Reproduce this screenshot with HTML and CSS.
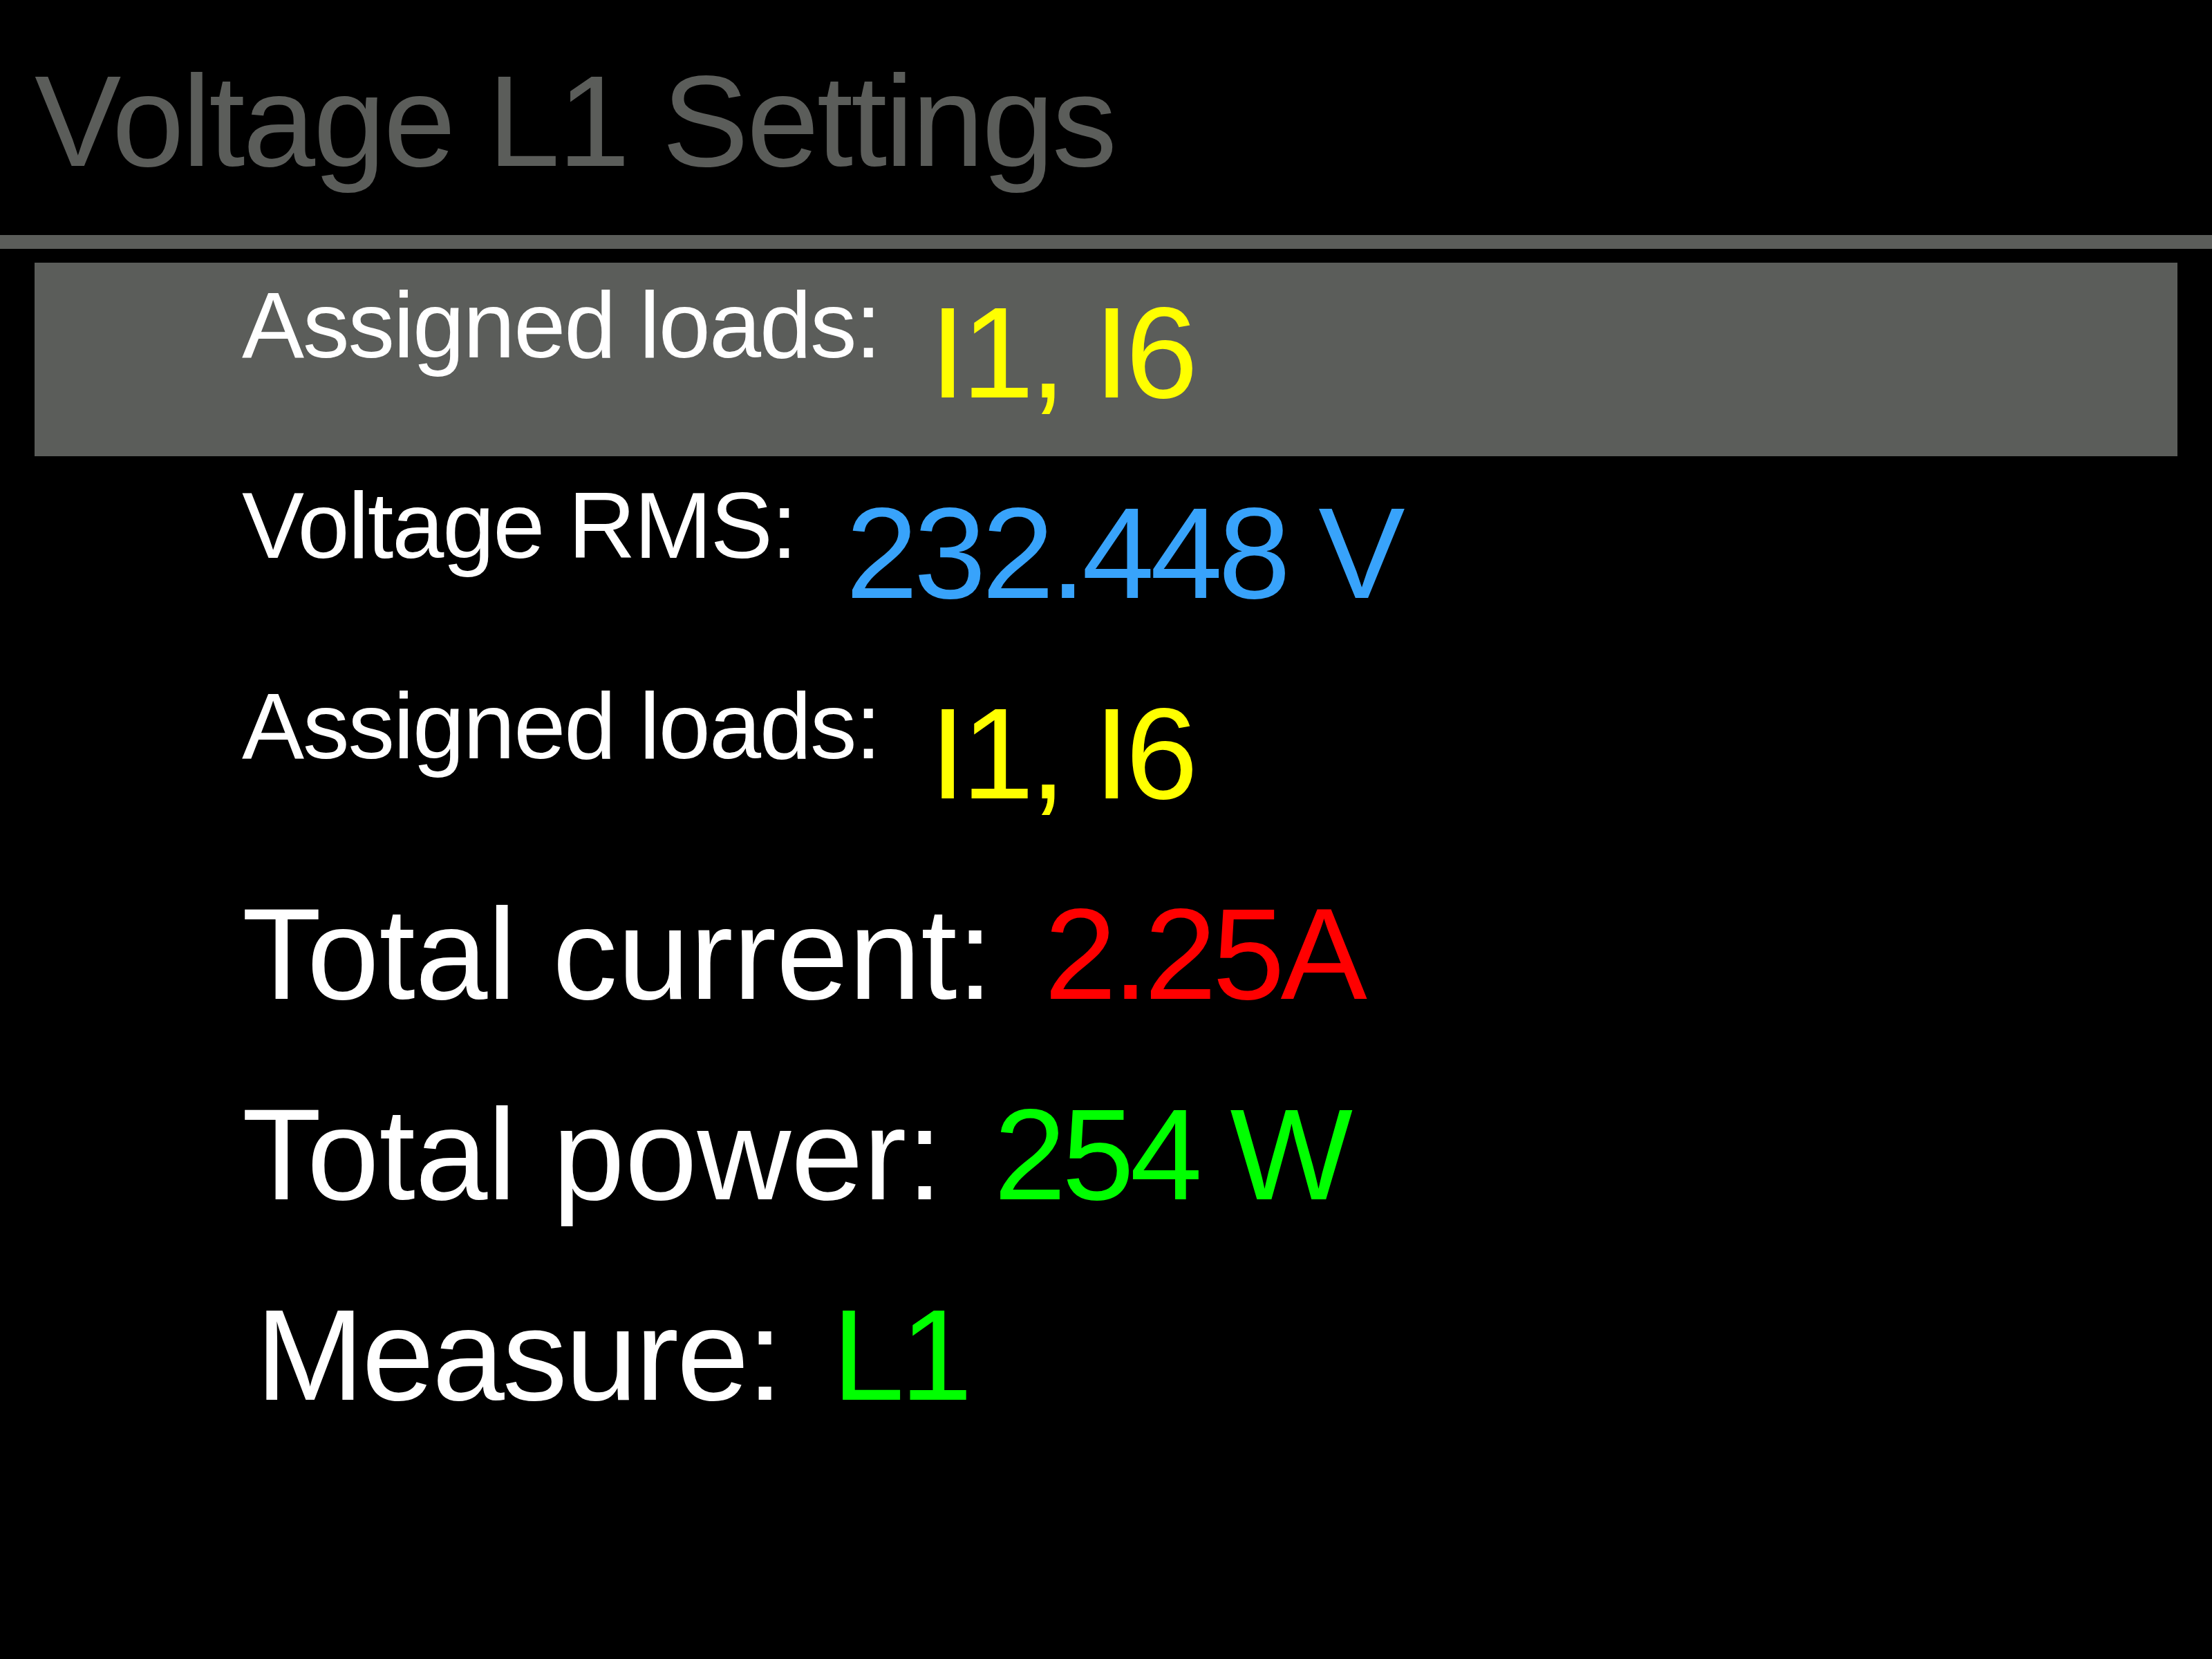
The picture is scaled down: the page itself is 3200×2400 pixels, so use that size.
FILE: index.html
```html
<!DOCTYPE html>
<html lang="en">
<head>
<meta charset="utf-8">
<title>Voltage L1 Settings</title>
<link rel="stylesheet" href="styles.css">
</head>
<body>
<div class="screen">
  <header class="title-bar">
    <h1 class="title">Voltage L1 Settings</h1>
  </header>
  <ul class="rows">
    <li class="row row-small selected"><span class="label">Assigned loads:</span><span class="value yellow">I1, I6</span></li>
    <li class="row row-small"><span class="label">Voltage RMS:</span><span class="value blue">232.448 V</span></li>
    <li class="row row-small"><span class="label">Assigned loads:</span><span class="value yellow">I1, I6</span></li>
    <li class="row row-big"><span class="label">Total current:</span><span class="value red">2.25A</span></li>
    <li class="row row-big"><span class="label">Total power:</span><span class="value green">254 W</span></li>
    <li class="row row-big indent"><span class="label">Measure:</span><span class="value green">L1</span></li>
  </ul>
</div>
</body>
</html>
```
FILE: styles.css
```css
html, body {
  margin: 0;
  padding: 0;
  background: #000;
}

.screen {
  width: 3200px;
  height: 2400px;
  background: #000;
  font-family: "Liberation Sans", Arial, sans-serif;
  overflow: hidden;
}

.title-bar {
  padding: 75px 0 65px 50px;
  border-bottom: 20px solid #5b5d5a;
}

.title {
  margin: 0;
  font-size: 188px;
  line-height: 200px;
  font-weight: 400;
  color: #5b5d5a;
  letter-spacing: -3px;
  white-space: nowrap;
}

.rows {
  list-style: none;
  margin: 20px 50px 0;
  padding: 0;
  display: flex;
  flex-direction: column;
  gap: 10px;
}

.row {
  height: 280px;
  box-sizing: border-box;
  padding: 36px 0 0 300px;
  display: flex;
  align-items: flex-start;
  gap: 72px;
  white-space: nowrap;
}

.row.selected {
  background: #5b5d5a;
}

.row.indent {
  padding-left: 320px;
}

.label {
  color: #fff;
}

.row-small .label {
  font-size: 135px;
  line-height: 110px;
  letter-spacing: -2px;
}

.row-big {
  align-items: baseline;
  gap: 74px;
}

.row-big .label {
  font-size: 188px;
  line-height: 188px;
  letter-spacing: 0;
}

.row.indent .label {
  letter-spacing: -3px;
}

.value {
  font-size: 188px;
  line-height: 188px;
  letter-spacing: -6px;
}

.yellow { color: #ffff00; }
.blue { color: #38a3fb; }
.red { color: #ff0000; }
.green { color: #00ff00; }
```
